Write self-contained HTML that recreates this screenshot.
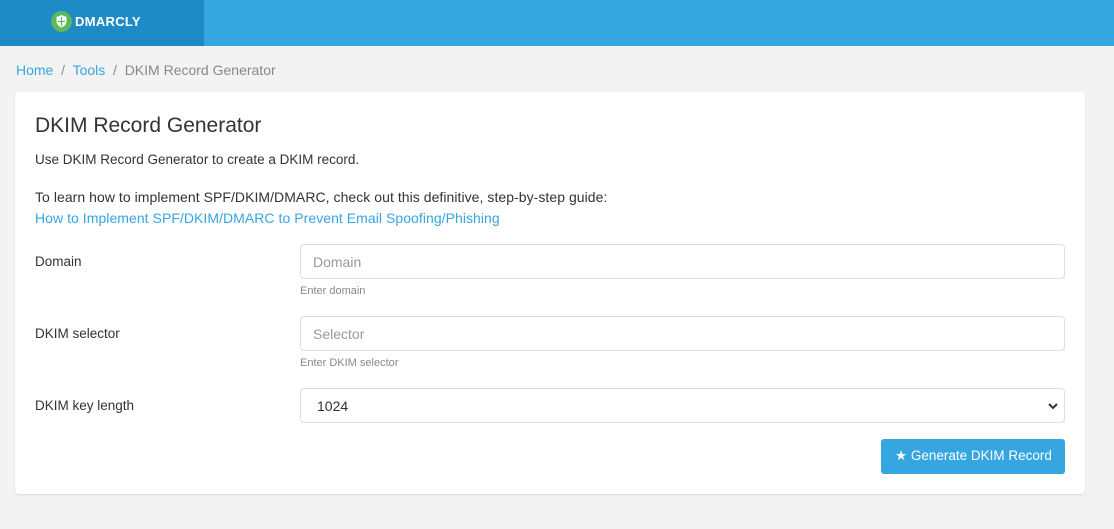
<!DOCTYPE html>
<html><head><style>
*{box-sizing:border-box;margin:0;padding:0}
body{width:1114px;height:529px;background:#f3f3f3;font-family:"Liberation Sans",sans-serif;font-size:14px;color:#333;position:relative;overflow:hidden}
.top{position:absolute;left:0;top:0;width:1114px;height:46px;background:#36a6e0}
.brand{position:absolute;left:0;top:0;width:204px;height:46px;background:#1e8bc6}
.logo{position:absolute;left:51px;top:11px;width:21px;height:21px;border-radius:50%;background:#5cb85c}
.bt{position:absolute;left:75px;top:14px;color:#fff;font-weight:bold;font-size:13px;letter-spacing:.3px}
.bc{position:absolute;left:16px;top:62px;font-size:14px;color:#888}
.bc a{color:#36a6e0;text-decoration:none}
.card{position:absolute;left:15px;top:92px;width:1070px;height:402px;background:#fff;border-radius:4px;box-shadow:0 1px 2px rgba(0,0,0,.12)}
h1{position:absolute;left:20px;top:22px;font-size:21px;font-weight:normal;color:#333}
.t{position:absolute;left:20px;font-size:13.5px}
.w{font-size:14px;letter-spacing:.05px}
.lnk{color:#36a6e0}
.inp{position:absolute;left:285px;width:765px;height:35px;border:1px solid #dde;border-radius:4px;padding:9px 12px;color:#999;font-size:14px}
.help{position:absolute;left:285px;font-size:11px;color:#888}
.btn{position:absolute;left:866px;top:347px;width:184px;height:35px;background:#36a6e0;border-radius:3px;color:#fff;font-size:13.5px;padding:9px 0 0 14px}
</style></head><body>
<div class="top"></div><div class="brand"></div>
<div class="logo"><svg width="21" height="21" viewBox="0 0 21 21"><path d="M10.5 4l5 2v4c0 3.5-2.5 5.5-5 6.5-2.5-1-5-3-5-6.5V6z" fill="#fff"/><path d="M10.5 6v9M7 10.5h7" stroke="#5cb85c" stroke-width="1.2"/></svg></div>
<div class="bt">DMARCLY</div>
<div class="bc"><a>Home</a> &nbsp;/&nbsp; <a>Tools</a> &nbsp;/&nbsp; DKIM Record Generator</div>
<div class="card">
<h1>DKIM Record Generator</h1>
<div class="t" style="top:60px">Use DKIM Record Generator to create a DKIM record.</div>
<div class="t w" style="top:97px">To learn how to implement SPF/DKIM/DMARC, check out this definitive, step-by-step guide:</div>
<div class="t lnk w" style="top:118px">How to Implement SPF/DKIM/DMARC to Prevent Email Spoofing/Phishing</div>
<div class="t" style="top:162px">Domain</div>
<div class="inp" style="top:152px">Domain</div>
<div class="help" style="top:193px">Enter domain</div>
<div class="t" style="top:234px">DKIM selector</div>
<div class="inp" style="top:224px">Selector</div>
<div class="help" style="top:265px">Enter DKIM selector</div>
<div class="t" style="top:306px">DKIM key length</div>
<div class="inp" style="top:296px;color:#333;padding-left:16px">1024<svg style="position:absolute;right:6px;top:13px" width="10" height="8" viewBox="0 0 10 8"><path d="M1 2l4 4 4-4" stroke="#333" stroke-width="2" fill="none"/></svg></div>
<div class="btn">★ Generate DKIM Record</div>
</div>
</body></html>
